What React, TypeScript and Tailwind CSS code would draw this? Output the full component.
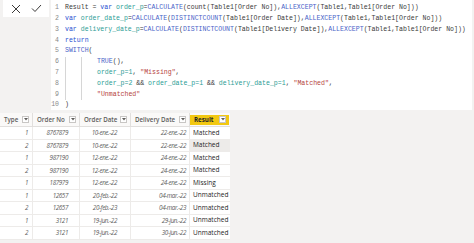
import React from 'react';

type Seg = [string, string];

const K = 'text-[#1f4fd0]'; // keywords
const F = 'text-[#4a64c8]'; // functions
const V = 'text-[#2c9d95]'; // variables
const S = 'text-[#b5433c]'; // strings
const P = 'text-[#3a3a3a]'; // plain

const lines: { indent: boolean; segs: Seg[] }[] = [
  {
    indent: false,
    segs: [
      ['Result = ', P],
      ['var ', K],
      ['order_p', V],
      ['=', P],
      ['CALCULATE', F],
      ['(count(Table1[Order No]),', P],
      ['ALLEXCEPT', F],
      ['(Table1,Table1[Order No]))', P],
    ],
  },
  {
    indent: false,
    segs: [
      ['var ', K],
      ['order_date_p', V],
      ['=', P],
      ['CALCULATE', F],
      ['(', P],
      ['DISTINCTCOUNT', F],
      ['(Table1[Order Date]),', P],
      ['ALLEXCEPT', F],
      ['(Table1,Table1[Order No]))', P],
    ],
  },
  {
    indent: false,
    segs: [
      ['var ', K],
      ['delivery_date_p', V],
      ['=', P],
      ['CALCULATE', F],
      ['(', P],
      ['DISTINCTCOUNT', F],
      ['(Table1[Delivery Date]),', P],
      ['ALLEXCEPT', F],
      ['(Table1,Table1[Order No]))', P],
    ],
  },
  { indent: false, segs: [['return', K]] },
  { indent: false, segs: [['SWITCH', F], ['(', P]] },
  { indent: true, segs: [['TRUE', F], ['(),', P]] },
  {
    indent: true,
    segs: [
      ['order_p', V],
      ['=1', V],
      [', ', P],
      ['"Missing"', S],
      [',', P],
    ],
  },
  {
    indent: true,
    segs: [
      ['order_p', V],
      ['=2', V],
      [' && ', P],
      ['order_date_p', V],
      ['=1', V],
      [' && ', P],
      ['delivery_date_p', V],
      ['=1', V],
      [', ', P],
      ['"Matched"', S],
      [',', P],
    ],
  },
  { indent: true, segs: [['"Unmatched"', S]] },
  { indent: false, segs: [[')', P]] },
];

const rows = [
  ['1', '8767879', '10-ene.-22', '22-ene.-22', 'Matched'],
  ['2', '8767879', '10-ene.-22', '22-ene.-22', 'Matched'],
  ['1', '987190', '12-ene.-22', '24-ene.-22', 'Matched'],
  ['2', '987190', '12-ene.-22', '24-ene.-22', 'Matched'],
  ['1', '187979', '12-ene.-22', '24-ene.-22', 'Missing'],
  ['1', '12657', '20-feb.-22', '04-mar.-22', 'Unmatched'],
  ['2', '12657', '20-feb.-23', '04-mar.-23', 'Unmatched'],
  ['1', '3121', '19-jun.-22', '29-jun.-22', 'Unmatched'],
  ['2', '3121', '19-jun.-22', '30-jun.-22', 'Unmatched'],
];

const DropBtn = () => (
  <span className="flex h-[7px] w-[7px] items-center justify-center border border-[#c8c6c4] bg-white">
    <svg width="4" height="3" viewBox="0 0 4 3">
      <path d="M0 0 L4 0 L2 2.5 Z" fill="#605e5c" />
    </svg>
  </span>
);

const App = () => {
  return (
    <div className="h-[243px] w-[474px] overflow-hidden bg-[#f3f2f1]">
      {/* formula bar */}
      <div className="flex h-[110px]">
        <div className="ml-[3px] flex h-[17px] w-[46px] items-center justify-between bg-white pl-[8px] pr-[7px]">
          <svg width="10" height="10" viewBox="0 0 10 10">
            <path d="M1 1 L9 9 M9 1 L1 9" stroke="#3b3a39" strokeWidth="1" />
          </svg>
          <svg width="11" height="9" viewBox="0 0 11 9">
            <path d="M1 4.5 L4 7.5 L10 1" stroke="#3b3a39" strokeWidth="1" fill="none" />
          </svg>
        </div>
        <div className="ml-[2px] w-[421px] bg-white pt-[3px] font-['Liberation_Mono',monospace] text-[6.55px]">
          {lines.map((ln, i) => (
            <div key={i} className="flex h-[10.8px] items-center whitespace-pre leading-none">
              <span className="w-[8px] text-right text-[#8a8a8a]">{i + 1}</span>
              <span className="w-[6px]" />
              {ln.indent && (
                <>
                  <span className="h-full w-[16px] border-l border-[#d6d6d6]" />
                  <span className="h-full w-[16px] border-l border-[#d6d6d6]" />
                </>
              )}
              {ln.segs.map(([t, c], j) => (
                <span key={j} className={c}>
                  {t}
                </span>
              ))}
            </div>
          ))}
        </div>
      </div>

      {/* data table */}
      <div className="mt-[3px] w-[230px] bg-white font-['Open_Sans',sans-serif]">
        <div className="grid h-[14px] grid-cols-[33px_47px_51px_59px_40px] border-b border-[#e1dfdd] bg-[#faf9f8] text-[6.2px] font-semibold text-[#605e5c]">
          {['Type', 'Order No', 'Order Date', 'Delivery Date'].map((h) => (
            <div key={h} className="flex items-center justify-between border-r border-[#e1dfdd] pl-[4px] pr-[3px]">
              <span>{h}</span>
              <DropBtn />
            </div>
          ))}
          <div className="flex items-center py-[1.5px]">
            <div className="flex h-full w-[39px] items-center justify-between bg-[#f2c811] pl-[4px] pr-[3px] font-bold text-[#252423]">
              <span>Result</span>
              <DropBtn />
            </div>
          </div>
        </div>
        {rows.map((r, i) => (
          <div
            key={i}
            className="grid h-[12.5px] grid-cols-[33px_47px_51px_59px_40px] border-b border-[#edebe9] text-[6.3px] italic tracking-[-0.4px] text-[#605e5c]"
          >
            <div className="flex items-center justify-end border-r border-[#edebe9] pr-[4px]">{r[0]}</div>
            <div className="flex items-center justify-end border-r border-[#edebe9] pr-[11px]">{r[1]}</div>
            <div className="flex items-center justify-end border-r border-[#edebe9] pr-[13px]">{r[2]}</div>
            <div className="flex items-center justify-end border-r border-[#edebe9] pr-[3px]">{r[3]}</div>
            <div
              className={`flex items-center pl-[3px] text-[6.5px] not-italic tracking-normal text-[#252423] ${
                i === 1 ? 'bg-[#edebe9]' : ''
              }`}
            >
              {r[4]}
            </div>
          </div>
        ))}
      </div>
    </div>
  );
};

export default App;
